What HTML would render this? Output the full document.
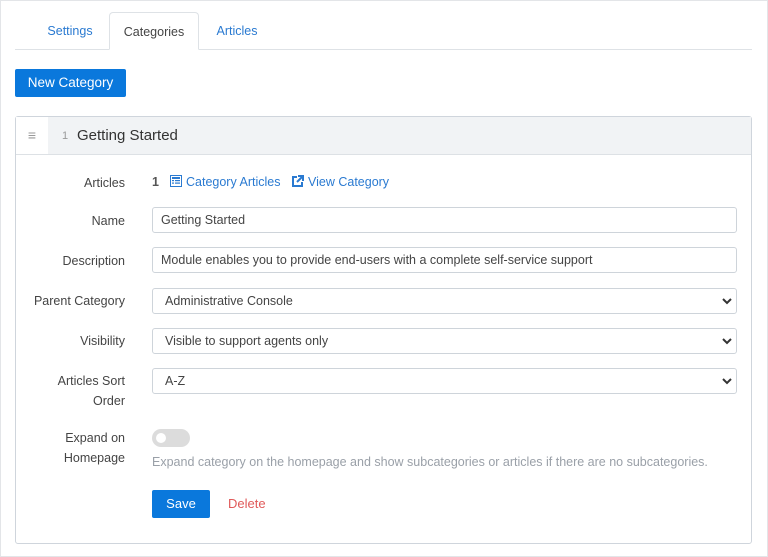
<!DOCTYPE html>
<html><head><style>
*{box-sizing:border-box;margin:0;padding:0}
body{width:768px;height:557px;background:#fff;font-family:"Liberation Sans",sans-serif;font-size:12.5px;color:#333;position:relative;overflow:hidden}
.frame{position:absolute;left:0;top:0;width:768px;height:557px;border:1px solid #e3e5e8}
.a{position:absolute;white-space:nowrap}
.tabline{position:absolute;left:15px;top:49px;width:737px;height:1px;background:#dee2e6}
.tab{position:absolute;top:12px;height:38px;line-height:39px;text-align:center;color:#2a7ad1;font-size:12.5px}
.act{border:1px solid #dee2e6;border-bottom:1px solid #fff;border-radius:4px 4px 0 0;background:#fff;color:#444}
.btn{position:absolute;background:#0a78dc;color:#fff;border-radius:2px;text-align:center;font-size:13.5px}
.card{position:absolute;left:15px;top:116px;width:737px;height:428px;border:1px solid #cfd5dc;border-radius:3px}
.hdr{position:absolute;left:0;top:0;width:735px;height:38px;background:#f1f3f5;border-bottom:1px solid #dde1e5}
.lab{position:absolute;right:643px;text-align:right;color:#444;line-height:20px}
.in{position:absolute;left:152px;width:585px;height:26px;border:1px solid #ced4da;border-radius:3px;line-height:25px;padding-left:8px;color:#444;background:#fff}
.sel{padding-left:12px}
.chev{position:absolute;right:4px;top:8px;width:10px;height:8px}
</style></head><body>
<div class="frame"></div>
<div class="tabline"></div>
<div class="tab" style="left:38px;width:64px">Settings</div>
<div class="tab act" style="left:109px;width:90px">Categories</div>
<div class="tab" style="left:206px;width:62px">Articles</div>
<div class="btn" style="left:15px;top:69px;width:111px;height:28px;line-height:28px">New Category</div>
<div class="card"><div class="hdr">
<div class="a" style="left:0;top:0;width:32px;height:37px;background:#fff;color:#999;text-align:center;line-height:37px;font-size:14px">≡</div>
<div class="a" style="left:46px;top:13px;color:#999;font-size:11px">1</div>
<div class="a" style="left:61px;top:10px;font-size:15px;color:#333">Getting Started</div>
</div></div>
<div class="lab" style="top:173px">Articles</div>
<div class="a" style="left:152px;top:175px;color:#555;font-weight:bold">1</div>
<svg class="a" style="left:170px;top:175px" width="12" height="12" viewBox="0 0 12 12"><rect x="0.5" y="0.5" width="11" height="11" fill="none" stroke="#2a7ad1"/><rect x="2" y="2" width="8" height="2" fill="#2a7ad1"/><rect x="2" y="5" width="2" height="1.2" fill="#2a7ad1"/><rect x="5" y="5" width="5" height="1.2" fill="#2a7ad1"/><rect x="2" y="7.5" width="2" height="1.2" fill="#2a7ad1"/><rect x="5" y="7.5" width="5" height="1.2" fill="#2a7ad1"/></svg>
<div class="a" style="left:186px;top:175px;color:#2a7ad1">Category Articles</div>
<svg class="a" style="left:291px;top:175px" width="13" height="13" viewBox="0 0 13 13"><path d="M6 2H2v9h9V7" fill="none" stroke="#2a7ad1" stroke-width="2"/><path d="M7 1h5v5M12 1L6 7" fill="none" stroke="#2a7ad1" stroke-width="2"/></svg>
<div class="a" style="left:308px;top:175px;color:#2a7ad1">View Category</div>
<div class="lab" style="top:211px">Name</div>
<div class="in" style="top:207px">Getting Started</div>
<div class="lab" style="top:251px">Description</div>
<div class="in" style="top:247px">Module enables you to provide end-users with a complete self-service support</div>
<div class="lab" style="top:291px">Parent Category</div>
<div class="in sel" style="top:288px">Administrative Console<svg class="chev" viewBox="0 0 10 8"><path d="M1 2l4 4 4-4" fill="none" stroke="#333" stroke-width="2"/></svg></div>
<div class="lab" style="top:331px">Visibility</div>
<div class="in sel" style="top:328px">Visible to support agents only<svg class="chev" viewBox="0 0 10 8"><path d="M1 2l4 4 4-4" fill="none" stroke="#333" stroke-width="2"/></svg></div>
<div class="lab" style="top:371px">Articles Sort<br>Order</div>
<div class="in sel" style="top:368px">A-Z<svg class="chev" viewBox="0 0 10 8"><path d="M1 2l4 4 4-4" fill="none" stroke="#333" stroke-width="2"/></svg></div>
<div class="lab" style="top:428px">Expand on<br>Homepage</div>
<div class="a" style="left:152px;top:429px;width:38px;height:18px;border-radius:9px;background:#dcdcdc"><div style="position:absolute;left:4px;top:4px;width:10px;height:10px;border-radius:5px;background:#fff"></div></div>
<div class="a" style="left:152px;top:455px;color:#9aa0a8">Expand category on the homepage and show subcategories or articles if there are no subcategories.</div>
<div class="btn" style="left:152px;top:490px;width:58px;height:28px;line-height:28px;font-size:13px">Save</div>
<div class="a" style="left:228px;top:496px;color:#e05a5a;font-size:13px">Delete</div>
</body></html>
